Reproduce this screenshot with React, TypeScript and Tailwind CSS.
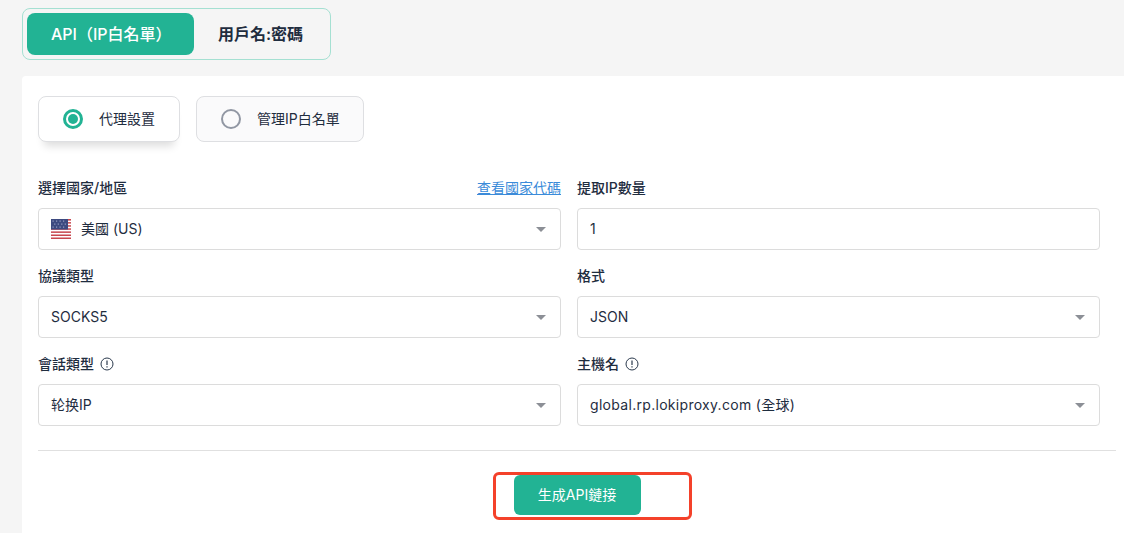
const font = "font-['Inter','Noto_Sans_CJK_TC',sans-serif]";

const Caret = () => (
  <div className="w-0 h-0 border-x-[5px] border-x-transparent border-t-[5px] border-t-[#8c8f96]" />
);

const Info = () => (
  <svg width="14" height="14" viewBox="0 0 14 14" fill="none" stroke="#2b3a4d" strokeWidth="1">
    <circle cx="7" cy="7" r="6" />
    <path d="M7 3.5v4.5M7 9.2v1.2" strokeWidth="1.2" />
  </svg>
);

const Flag = () => (
  <svg width="20" height="20" viewBox="0 0 20 20" className="shrink-0">
    <rect width="20" height="20" fill="#fff" />
    <rect y="0" width="20" height="1.6" fill="#c8474f" />
    <rect y="3.1" width="20" height="1.5" fill="#c8474f" />
    <rect y="6.2" width="20" height="1.5" fill="#c8474f" />
    <rect y="9.3" width="20" height="1.5" fill="#c8474f" />
    <rect y="12.4" width="20" height="1.5" fill="#c8474f" />
    <rect y="15.5" width="20" height="1.5" fill="#c8474f" />
    <rect y="18.5" width="20" height="1.5" fill="#c8474f" />
    <rect width="17" height="10.5" fill="#3d4a80" />
    <g fill="#9aa0c4">
      <rect x="1.5" y="1.5" width="1.2" height="1.2" />
      <rect x="5" y="1.5" width="1.2" height="1.2" />
      <rect x="8.5" y="1.5" width="1.2" height="1.2" />
      <rect x="12" y="1.5" width="1.2" height="1.2" />
      <rect x="3.2" y="4.5" width="1.2" height="1.2" />
      <rect x="6.7" y="4.5" width="1.2" height="1.2" />
      <rect x="10.2" y="4.5" width="1.2" height="1.2" />
      <rect x="13.7" y="4.5" width="1.2" height="1.2" />
      <rect x="1.5" y="7.5" width="1.2" height="1.2" />
      <rect x="5" y="7.5" width="1.2" height="1.2" />
      <rect x="8.5" y="7.5" width="1.2" height="1.2" />
      <rect x="12" y="7.5" width="1.2" height="1.2" />
    </g>
  </svg>
);

const Field = ({ label, info, link, value, flag, caret = true, wide }: {
  label: string;
  info?: boolean;
  link?: string;
  value: string;
  flag?: boolean;
  caret?: boolean;
  wide?: boolean;
}) => (
  <div>
    <div className="h-5 mb-2.5 flex items-center justify-between text-sm font-medium text-[#1f2d3f]">
      <div className="flex items-center gap-1.5">
        {label}
        {info && <Info />}
      </div>
      {link && <a className="text-[#3b8bd9] underline font-normal">{link}</a>}
    </div>
    <div className="h-[42px] bg-white border border-[#dcdcdc] rounded-[4px] pl-3 pr-[14px] flex items-center justify-between text-sm text-[#1f2d3f]">
      <div className={wide ? "flex items-center gap-2.5 tracking-[0.3px]" : "flex items-center gap-2.5"}>
        {flag && <Flag />}
        {value}
      </div>
      {caret && <Caret />}
    </div>
  </div>
);

const App = () => {
  return (
    <div className={`${font} relative h-[533px] w-[1124px] overflow-hidden bg-[#f5f5f5]`}>
      <div className="pl-[22px] pt-2">
        <div className="w-[309px] h-[52px] p-1 flex border border-[#a5e0d2] rounded-lg">
          <div className="w-[167px] h-[42px] bg-[#22b394] rounded-lg text-white text-base font-medium flex items-center pl-6">
            API（IP白名單）
          </div>
          <div className="flex-1 flex items-center pl-6 text-base font-semibold text-[#1f2d3f]">
            用戶名:密碼
          </div>
        </div>
      </div>

      <div className="ml-[22px] mt-4 h-[457px] bg-white rounded-tl-[4px] pl-4 pr-2 pt-5">
        <div className="flex gap-4">
          <div className="w-[142px] h-[46px] bg-white border border-[#dedfe2] rounded-lg shadow-[0_10px_8px_-6px_rgba(0,0,0,0.14)] flex items-center pl-6 gap-4 text-sm text-[#1f2d3f]">
            <div className="w-5 h-5 rounded-full border-[3px] border-[#22b394] flex items-center justify-center">
              <div className="w-2.5 h-2.5 rounded-full bg-[#22b394]" />
            </div>
            代理設置
          </div>
          <div className="w-[168px] h-[46px] bg-[#fafafb] border border-[#dedfe2] rounded-lg flex items-center pl-6 gap-4 text-sm text-[#1f2d3f]">
            <div className="w-5 h-5 rounded-full border-2 border-[#9197a3]" />
            管理IP白名單
          </div>
        </div>

        <div className="mt-9 w-[1062px] grid grid-cols-2 gap-x-4 gap-y-4">
          <Field label="選擇國家/地區" link="查看國家代碼" value="美國 (US)" flag />
          <Field label="提取IP數量" value="1" caret={false} />
          <Field label="協議類型" value="SOCKS5" />
          <Field label="格式" value="JSON" />
          <Field label="會話類型" info value="轮换IP" />
          <Field label="主機名" info value="global.rp.lokiproxy.com (全球)" wide />
        </div>

        <div className="mt-6 border-t border-[#e0e0e0]" />

        <div className="mt-6 w-[1078px] flex justify-center">
          <div className="w-[127px] h-10 bg-[#22b394] rounded-md text-white text-sm flex items-center justify-center">
            生成API鏈接
          </div>
        </div>
      </div>

      <div className="absolute left-[493px] top-[472px] w-[199px] h-[48px] border-[3px] border-[#f4412a] rounded-md" />
    </div>
  );
};

export default App;
